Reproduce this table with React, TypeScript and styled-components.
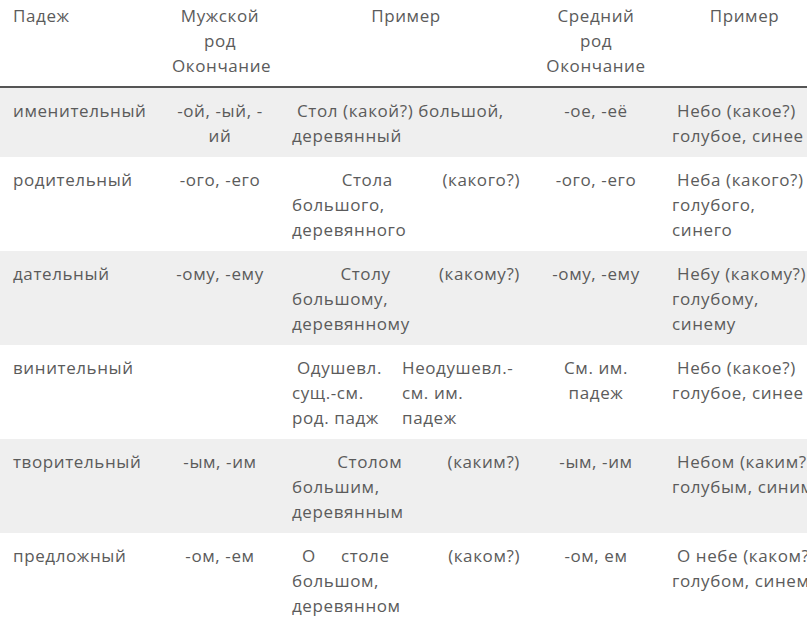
import React from "react";
import styled, { createGlobalStyle } from "styled-components";

const GlobalStyle = createGlobalStyle`
  body {
    margin: 0;
    background: #ffffff;
    overflow: hidden;
  }
`;

const COLS = "160px 120px 116px 136px 128px 169px";

const Table = styled.div`
  width: 829px;
  font-family: "Open Sans", "Liberation Sans", sans-serif;
  font-size: 17px;
  line-height: 25px;
  letter-spacing: 0.6px;
  color: #5b5b5b;
`;

const HeadRow = styled.div`
  display: grid;
  grid-template-columns: ${COLS};
  padding: 3px 0 8px;
  border-bottom: 2px solid #555555;
`;

const Row = styled.div<{ $shade: boolean }>`
  display: grid;
  grid-template-columns: ${COLS};
  padding: 9.5px 0;
  background: ${({ $shade }) => ($shade ? "#efefef" : "#ffffff")};
`;

const Cell = styled.div<{ $center?: boolean; $span?: number; $first?: boolean; $sub?: "a" | "b" }>`
  grid-column: span ${({ $span }) => $span || 1};
  text-align: ${({ $center }) => ($center ? "center" : "left")};
  padding: ${({ $first, $sub }) =>
    $first ? "0 8px 0 13px" : $sub === "a" ? "0 4px 0 12px" : $sub === "b" ? "0 10px 0 6px" : "0 12px"};
  white-space: pre-wrap;
`;

const JustLine = styled.div`
  display: flex;
  justify-content: space-between;
  white-space: pre;
`;

const Just = ({ words }: { words: string[] }) => (
  <JustLine>
    {words.map((w, i) => (
      <span key={i}>{w}</span>
    ))}
  </JustLine>
);

type CaseRow = {
  name: string;
  masc: string;
  example: React.ReactNode;
  neut: string;
  example2: string;
};

const rows: CaseRow[] = [
  {
    name: "именительный",
    masc: "-ой, -ый, -\nий",
    example: " Стол (какой?) большой, деревянный",
    neut: "-ое, -её",
    example2: " Небо (какое?) голубое, синее",
  },
  {
    name: "родительный",
    masc: "-ого, -его",
    example: (
      <>
        <Just words={["", "Стола", "(какого?)"]} />
        <div>большого,</div>
        <div>деревянного</div>
      </>
    ),
    neut: "-ого, -его",
    example2: " Неба (какого?) голубого, синего",
  },
  {
    name: "дательный",
    masc: "-ому, -ему",
    example: (
      <>
        <Just words={["", "Столу", "(какому?)"]} />
        <div>большому,</div>
        <div>деревянному</div>
      </>
    ),
    neut: "-ому, -ему",
    example2: " Небу (какому?) голубому, синему",
  },
  {
    name: "винительный",
    masc: "",
    example: null,
    neut: "См. им. падеж",
    example2: " Небо (какое?) голубое, синее",
  },
  {
    name: "творительный",
    masc: "-ым, -им",
    example: (
      <>
        <Just words={["", "Столом", "(каким?)"]} />
        <div>большим,</div>
        <div>деревянным</div>
      </>
    ),
    neut: "-ым, -им",
    example2: " Небом (каким?) голубым, синим",
  },
  {
    name: "предложный",
    masc: "-ом, -ем",
    example: (
      <>
        <Just words={["  О     столе", "(каком?)"]} />
        <div>большом,</div>
        <div>деревянном</div>
      </>
    ),
    neut: "-ом, ем",
    example2: " О небе (каком?) голубом, синем",
  },
];

export default function App() {
  return (
    <>
      <GlobalStyle />
      <Table>
        <HeadRow>
          <Cell $first>Падеж</Cell>
          <Cell $center>Мужской род Окончание</Cell>
          <Cell $center $span={2}>Пример</Cell>
          <Cell $center>Средний род Окончание</Cell>
          <Cell $center>Пример</Cell>
        </HeadRow>
        {rows.map((r, i) => (
          <Row key={r.name} $shade={i % 2 === 0}>
            <Cell $first>{r.name}</Cell>
            <Cell $center>{r.masc}</Cell>
            {r.example === null ? (
              <>
                <Cell $sub="a"> Одушевл. сущ.-см. род. падж</Cell>
                <Cell $sub="b">Неодушевл.- см. им. падеж</Cell>
              </>
            ) : (
              <Cell $span={2}>{r.example}</Cell>
            )}
            <Cell $center>{r.neut}</Cell>
            <Cell>{r.example2}</Cell>
          </Row>
        ))}
      </Table>
    </>
  );
}
